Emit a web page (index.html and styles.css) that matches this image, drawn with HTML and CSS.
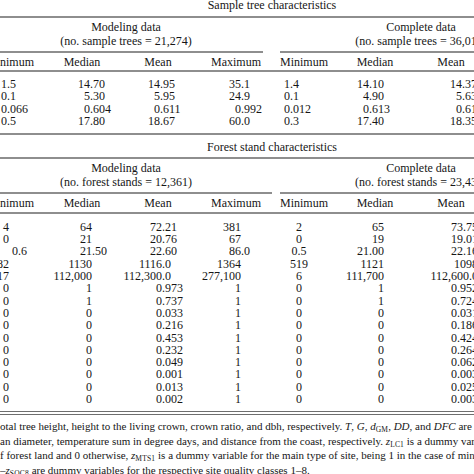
FILE: index.html
```html
<!DOCTYPE html>
<html lang="en">
<head>
<meta charset="utf-8">
<title>Table</title>
<link rel="stylesheet" href="styles.css">
</head>
<body>
<div class="page">
  <section class="sec sec-tree">
    <div class="title">Sample tree characteristics</div>
    <div class="rule r-top"></div>
    <div class="groups">
      <div class="group g-left">Modeling data<br>(no. sample trees = 21,274)</div>
      <div class="group g-right">Complete data<br>(no. sample trees = 36,012)</div>
    </div>
    <div class="grule"><div class="seg seg-left"></div><div class="seg seg-right"></div></div>
    <div class="heads">
      <div class="h-first">Minimum</div><div>Median</div><div>Mean</div><div>Maximum</div>
      <div>Minimum</div><div>Median</div><div>Mean</div><div>Maximum</div>
    </div>
    <div class="rule r-head"></div>
    <div class="body">
      <div class="d"><span class="w">1</span>.5</div><div class="d"><span class="w">14</span>.70</div><div class="d"><span class="w">14</span>.95</div><div class="d"><span class="w">35</span>.1</div><div class="d"><span class="w">1</span>.4</div><div class="d"><span class="w">14</span>.10</div><div class="d"><span class="w">14</span>.37</div><div class="d"><span class="w">35</span>.1</div>
      <div class="d"><span class="w">0</span>.1</div><div class="d"><span class="w">5</span>.30</div><div class="d"><span class="w">5</span>.95</div><div class="d"><span class="w">24</span>.9</div><div class="d"><span class="w">0</span>.1</div><div class="d"><span class="w">4</span>.90</div><div class="d"><span class="w">5</span>.63</div><div class="d"><span class="w">24</span>.9</div>
      <div class="d"><span class="w">0</span>.066</div><div class="d"><span class="w">0</span>.604</div><div class="d"><span class="w">0</span>.611</div><div class="d"><span class="w">0</span>.992</div><div class="d"><span class="w">0</span>.012</div><div class="d"><span class="w">0</span>.613</div><div class="d"><span class="w">0</span>.613</div><div class="d"><span class="w">0</span>.992</div>
      <div class="d"><span class="w">0</span>.5</div><div class="d"><span class="w">17</span>.80</div><div class="d"><span class="w">18</span>.67</div><div class="d"><span class="w">60</span>.0</div><div class="d"><span class="w">0</span>.3</div><div class="d"><span class="w">17</span>.40</div><div class="d"><span class="w">18</span>.35</div><div class="d"><span class="w">60</span>.0</div>
    </div>
    <div class="rule r-end"></div>
  </section>

  <section class="sec sec-stand">
    <div class="title">Forest stand characteristics</div>
    <div class="rule r-top"></div>
    <div class="groups">
      <div class="group g-left">Modeling data<br>(no. forest stands = 12,361)</div>
      <div class="group g-right">Complete data<br>(no. forest stands = 23,435)</div>
    </div>
    <div class="grule"><div class="seg seg-left"></div><div class="seg seg-right"></div></div>
    <div class="heads">
      <div class="h-first">Minimum</div><div>Median</div><div>Mean</div><div>Maximum</div>
      <div>Minimum</div><div>Median</div><div>Mean</div><div>Maximum</div>
    </div>
    <div class="rule r-head"></div>
    <div class="body">
      <div class="d"><span class="w">4</span></div><div class="d"><span class="w">64</span></div><div class="d"><span class="w">72</span>.21</div><div class="d"><span class="w">381</span></div><div class="d"><span class="w">2</span></div><div class="d"><span class="w">65</span></div><div class="d"><span class="w">73</span>.75</div><div class="d"><span class="w">381</span></div>
      <div class="d"><span class="w">0</span></div><div class="d"><span class="w">21</span></div><div class="d"><span class="w">20</span>.76</div><div class="d"><span class="w">67</span></div><div class="d"><span class="w">0</span></div><div class="d"><span class="w">19</span></div><div class="d"><span class="w">19</span>.01</div><div class="d"><span class="w">67</span></div>
      <div class="d nudge"><span class="w">0</span>.6</div><div class="d"><span class="w">21</span>.50</div><div class="d"><span class="w">22</span>.60</div><div class="d"><span class="w">86</span>.0</div><div class="d"><span class="w">0</span>.5</div><div class="d"><span class="w">21</span>.00</div><div class="d"><span class="w">22</span>.16</div><div class="d"><span class="w">86</span>.0</div>
      <div class="d"><span class="w">482</span></div><div class="d"><span class="w">1130</span></div><div class="d"><span class="w">1116</span>.0</div><div class="d"><span class="w">1364</span></div><div class="d"><span class="w">519</span></div><div class="d"><span class="w">1121</span></div><div class="d"><span class="w">1098</span></div><div class="d"><span class="w">1364</span></div>
      <div class="d"><span class="w">4,517</span></div><div class="d"><span class="w">112,000</span></div><div class="d"><span class="w">112,300</span>.0</div><div class="d"><span class="w">277,100</span></div><div class="d"><span class="w">6</span></div><div class="d"><span class="w">111,700</span></div><div class="d"><span class="w">112,600</span>.0</div><div class="d"><span class="w">277,100</span></div>
      <div class="d"><span class="w">0</span></div><div class="d"><span class="w">1</span></div><div class="d"><span class="w">0</span>.973</div><div class="d"><span class="w">1</span></div><div class="d"><span class="w">0</span></div><div class="d"><span class="w">1</span></div><div class="d"><span class="w">0</span>.952</div><div class="d"><span class="w">1</span></div>
      <div class="d"><span class="w">0</span></div><div class="d"><span class="w">1</span></div><div class="d"><span class="w">0</span>.737</div><div class="d"><span class="w">1</span></div><div class="d"><span class="w">0</span></div><div class="d"><span class="w">1</span></div><div class="d"><span class="w">0</span>.724</div><div class="d"><span class="w">1</span></div>
      <div class="d"><span class="w">0</span></div><div class="d"><span class="w">0</span></div><div class="d"><span class="w">0</span>.033</div><div class="d"><span class="w">1</span></div><div class="d"><span class="w">0</span></div><div class="d"><span class="w">0</span></div><div class="d"><span class="w">0</span>.031</div><div class="d"><span class="w">1</span></div>
      <div class="d"><span class="w">0</span></div><div class="d"><span class="w">0</span></div><div class="d"><span class="w">0</span>.216</div><div class="d"><span class="w">1</span></div><div class="d"><span class="w">0</span></div><div class="d"><span class="w">0</span></div><div class="d"><span class="w">0</span>.186</div><div class="d"><span class="w">1</span></div>
      <div class="d"><span class="w">0</span></div><div class="d"><span class="w">0</span></div><div class="d"><span class="w">0</span>.453</div><div class="d"><span class="w">1</span></div><div class="d"><span class="w">0</span></div><div class="d"><span class="w">0</span></div><div class="d"><span class="w">0</span>.424</div><div class="d"><span class="w">1</span></div>
      <div class="d"><span class="w">0</span></div><div class="d"><span class="w">0</span></div><div class="d"><span class="w">0</span>.232</div><div class="d"><span class="w">1</span></div><div class="d"><span class="w">0</span></div><div class="d"><span class="w">0</span></div><div class="d"><span class="w">0</span>.264</div><div class="d"><span class="w">1</span></div>
      <div class="d"><span class="w">0</span></div><div class="d"><span class="w">0</span></div><div class="d"><span class="w">0</span>.049</div><div class="d"><span class="w">1</span></div><div class="d"><span class="w">0</span></div><div class="d"><span class="w">0</span></div><div class="d"><span class="w">0</span>.062</div><div class="d"><span class="w">1</span></div>
      <div class="d"><span class="w">0</span></div><div class="d"><span class="w">0</span></div><div class="d"><span class="w">0</span>.001</div><div class="d"><span class="w">1</span></div><div class="d"><span class="w">0</span></div><div class="d"><span class="w">0</span></div><div class="d"><span class="w">0</span>.003</div><div class="d"><span class="w">1</span></div>
      <div class="d"><span class="w">0</span></div><div class="d"><span class="w">0</span></div><div class="d"><span class="w">0</span>.013</div><div class="d"><span class="w">1</span></div><div class="d"><span class="w">0</span></div><div class="d"><span class="w">0</span></div><div class="d"><span class="w">0</span>.025</div><div class="d"><span class="w">1</span></div>
      <div class="d"><span class="w">0</span></div><div class="d"><span class="w">0</span></div><div class="d"><span class="w">0</span>.002</div><div class="d"><span class="w">1</span></div><div class="d"><span class="w">0</span></div><div class="d"><span class="w">0</span></div><div class="d"><span class="w">0</span>.003</div><div class="d"><span class="w">1</span></div>
    </div>
    <div class="rule r-double"></div>
  </section>

  <div class="notes">
    <div class="ln ln1">otal tree height, height to the living crown, crown ratio, and dbh, respectively. <i>T</i>, <i>G</i>, <i>d</i><sub>GM</sub>, <i>DD</i>, and <i>DFC</i> are stand age, basal area,</div>
    <div class="ln ln2">an diameter, temperature sum in degree days, and distance from the coast, respectively. <i>z</i><sub>LC1</sub> is a dummy variable for the land class,</div>
    <div class="ln ln3">f forest land and 0 otherwise, <i>z</i><sub>MTS1</sub> is a dummy variable for the main type of site, being 1 in the case of mineral soil</div>
    <div class="ln ln4">–<i>z</i><sub>SOC8</sub> are dummy variables for the respective site quality classes 1–8.</div>
  </div>
</div>
</body>
</html>
```
FILE: styles.css
```css
html, body {
  margin: 0;
  padding: 0;
  background: #ffffff;
}

body {
  width: 474px;
  height: 474px;
  overflow: hidden;
  font-family: "Liberation Serif", "Times New Roman", serif;
  font-size: 12px;
  color: #161616;
}

.page {
  width: 596px;
  margin-left: -26px;
  margin-top: -1px;
}

.title {
  height: 12px;
  line-height: 12px;
  text-align: center;
  white-space: nowrap;
}

.sec-stand .title {
  margin-top: 6px;
}

.rule {
  border-top: 2px solid #8e8e8e;
}

.sec .r-top { margin-top: 5px; }
.sec-stand .r-top { margin-top: 4px; }
.r-head { margin-top: 2px; }
.sec-stand .r-head { margin-top: 3px; }
.r-end { margin-top: 6px; }

.r-double {
  margin-top: 6px;
  border-top: 4px double #6e6e6e;
}

.groups {
  display: grid;
  grid-template-columns: 298px 298px;
  margin-top: 2px;
  line-height: 14px;
  white-space: nowrap;
}

.group {
  text-align: center;
}

.g-left {
  padding-left: 6px;
}

.grule {
  display: grid;
  grid-template-columns: 298px 298px;
  margin-top: 3px;
}

.seg {
  border-top: 2px solid #8e8e8e;
}

.seg-left { margin-right: 9px; }
.seg-right { margin-left: 8px; }
.sec-stand .seg-left { margin-right: 0; }

.heads {
  display: grid;
  grid-template-columns: 74px 68px 84px 72px 64px 78px 74px 82px;
  margin-top: 3px;
  line-height: 12px;
  text-align: center;
  white-space: nowrap;
}

.heads .h-first {
  padding-right: 2px;
}

.body {
  display: grid;
  grid-template-columns: 74px 68px 84px 72px 64px 78px 74px 82px;
  margin-top: 6px;
  line-height: 12.3px;
}

.sec-stand .body {
  margin-top: 6.7px;
}

.d {
  white-space: nowrap;
  --iw: 40px;
}

.d .w {
  display: inline-block;
  width: var(--iw);
  text-align: right;
}

/* sample tree table: decimal positions */
.sec-tree .d:nth-child(8n+1) { --iw: 33px; }
.sec-tree .d:nth-child(8n+2) { --iw: 42px; }
.sec-tree .d:nth-child(8n+3) { --iw: 44px; }
.sec-tree .d:nth-child(8n+4) { --iw: 41px; }
.sec-tree .d:nth-child(8n+5) { --iw: 18px; }
.sec-tree .d:nth-child(8n+6) { --iw: 33px; }
.sec-tree .d:nth-child(8n+7) { --iw: 48px; }
.sec-tree .d:nth-child(8n+8) { --iw: 40px; }

/* forest stand table */
.sec-stand .d:nth-child(8n+1) { --iw: 35px; }
.sec-stand .d:nth-child(8n+2) { --iw: 44px; }
.sec-stand .d:nth-child(8n+3) { --iw: 46px; }
.sec-stand .d:nth-child(8n+4) { --iw: 41px; }
.sec-stand .d:nth-child(8n+5) {
  text-align: center;
  padding-right: 10px;
}
.sec-stand .d:nth-child(8n+6) {
  text-align: right;
  padding-right: 30px;
}
.sec-stand .d:nth-child(8n+7) {
  text-align: right;
  padding-right: 10px;
}
.sec-stand .d:nth-child(8n+5) .w,
.sec-stand .d:nth-child(8n+6) .w,
.sec-stand .d:nth-child(8n+7) .w {
  width: auto;
}
.sec-stand .d:nth-child(8n+8) { --iw: 40px; }

.d.nudge {
  padding-left: 9px;
}

.notes {
  margin-top: 4px;
  margin-left: 26px;
  font-size: 11px;
  line-height: 14.5px;
}

.ln {
  white-space: nowrap;
}

.notes i {
  font-style: italic;
}

.notes sub {
  font-size: 7.5px;
  line-height: 0;
  vertical-align: -2px;
  letter-spacing: 0.2px;
}
```
